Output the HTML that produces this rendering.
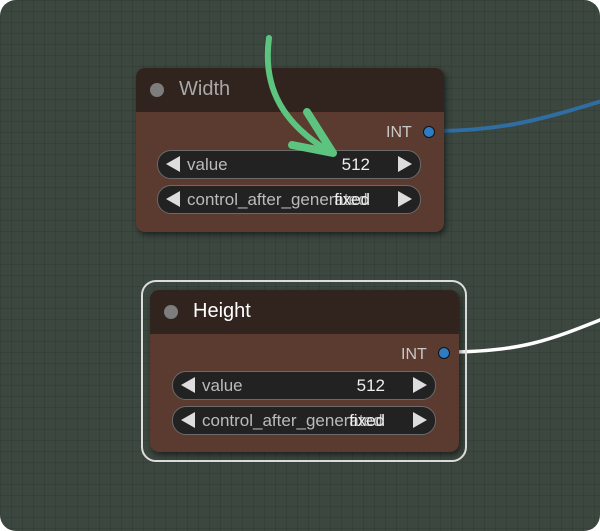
<!DOCTYPE html>
<html><head><style>
html,body{margin:0;padding:0;background:#fff;}
#c{position:relative;width:600px;height:531px;overflow:hidden;border-radius:16px;
background-color:#3b473f;
background-image:linear-gradient(rgba(20,30,24,.16) 1px,transparent 1px),linear-gradient(90deg,rgba(20,30,24,.16) 1px,transparent 1px);
background-size:11px 11px;font-family:"Liberation Sans",sans-serif;}
.node{position:absolute;background:#5b3a30;border-radius:9px;box-shadow:2px 3px 6px rgba(0,0,0,.5);overflow:hidden;}
.hd{height:44px;background:#31241f;position:relative;}
.hd .dot{position:absolute;left:14px;top:15px;width:14px;height:14px;border-radius:50%;background:#7d7d7d;}
.hd .t{position:absolute;left:43px;top:10px;font-size:20px;}
.int{position:absolute;font-size:16px;color:#c8c8c8;}
.sock{position:absolute;width:10px;height:10px;border-radius:50%;background:#2e7cc4;border:1px solid #111;}
.w{position:absolute;height:27px;border-radius:14px;background:#222;border:1px solid #6a6a6a;color:#bbb;font-size:17px;}
.w .l{position:absolute;left:8px;top:5px;width:0;height:0;border-top:8px solid transparent;border-bottom:8px solid transparent;border-right:14px solid #ddd;}
.w .r{position:absolute;right:8px;top:5px;width:0;height:0;border-top:8px solid transparent;border-bottom:8px solid transparent;border-left:14px solid #ddd;}
.w .n{position:absolute;left:29px;top:4px;}
.w .v{position:absolute;right:50px;top:4px;color:#eee;}
</style></head><body><div id="c">
<svg width="600" height="531" style="position:absolute;left:0;top:0">
<path d="M435 131 C 500 131, 540 120, 605 100" stroke="#2f6da3" stroke-width="4" fill="none"/>
<path d="M448 352 C 520 352, 550 340, 605 318" stroke="#fff" stroke-width="3.5" fill="none"/>
</svg>
<div class="node" style="left:136px;top:68px;width:308px;height:164px">
<div class="hd"><div class="dot"></div><div class="t" style="color:#a8a8a8">Width</div></div>
<div class="int" style="left:250px;top:56px">INT</div>
<div class="sock" style="left:287px;top:58px"></div>
<div class="w" style="left:21px;top:82px;width:262px"><div class="l"></div><div class="n">value</div><div class="v">512</div><div class="r"></div></div>
<div class="w" style="left:21px;top:117px;width:262px"><div class="l"></div><div class="n">control_after_generated</div><div class="v">fixed</div><div class="r"></div></div>
</div>
<div style="position:absolute;left:141px;top:280px;width:323px;height:179px;border:2px solid #ddd;border-radius:15px;box-sizing:border-box;width:326px;height:182px"></div>
<div class="node" style="left:150px;top:290px;width:309px;height:162px">
<div class="hd"><div class="dot"></div><div class="t" style="color:#fff">Height</div></div>
<div class="int" style="left:251px;top:56px">INT</div>
<div class="sock" style="left:288px;top:57px"></div>
<div class="w" style="left:22px;top:81px;width:262px"><div class="l"></div><div class="n">value</div><div class="v">512</div><div class="r"></div></div>
<div class="w" style="left:22px;top:116px;width:262px"><div class="l"></div><div class="n">control_after_generated</div><div class="v">fixed</div><div class="r"></div></div>
</div>
<svg width="600" height="531" style="position:absolute;left:0;top:0">
<path d="M269 38 C 262 90, 285 125, 330 152" stroke="#5cc47f" stroke-width="6" fill="none" stroke-linecap="round"/>
<path d="M307 112 L 333 153 L 292 145" stroke="#5cc47f" stroke-width="8" fill="none" stroke-linecap="round" stroke-linejoin="round"/>
</svg>
</div></body></html>
